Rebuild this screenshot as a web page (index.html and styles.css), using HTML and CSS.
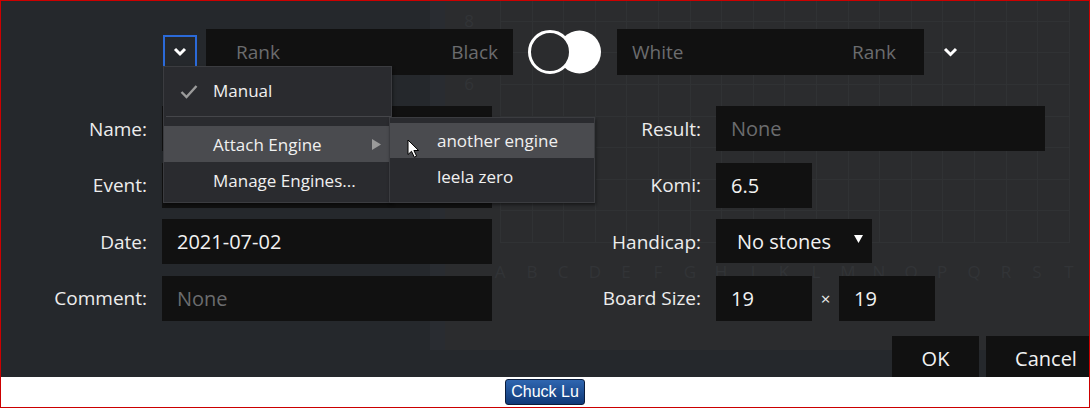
FILE: index.html
```html
<!DOCTYPE html>
<html>
<head>
<meta charset="utf-8">
<title>Game Info</title>
<link rel="stylesheet" href="styles.css">
</head>
<body>
<div class="frame">
<div class="stage">

<svg class="board" width="660" height="352" viewBox="0 0 660 352">
  <rect x="0" y="0" width="660" height="350" fill="#2b2c2e"/>
  <rect x="0" y="0" width="15" height="350" fill="#292c31"/>
  <g stroke="#303234" stroke-width="1">
    <path d="M70.5 0V242M102.5 0V242M133.5 0V242M165.5 0V242M196.5 0V242M228.5 0V242M260.5 0V242M291.5 0V242M323.5 0V242M354.5 0V242M386.5 0V242M418.5 0V242M449.5 0V242M481.5 0V242M512.5 0V242M544.5 0V242M576.5 0V242M607.5 0V242M639.5 0V242"/>
    <path d="M70 21.5H640M70 52.5H640M70 84.5H640M70 116.5H640M70 147.5H640M70 179.5H640M70 210.5H640M70 242.5H640"/>
  </g>
  <g class="coord" fill="#323437">
    <text x="39" y="27">8</text><text x="39" y="90">6</text>
    <text x="70" y="278">A</text><text x="102" y="278">B</text><text x="133" y="278">C</text><text x="165" y="278">D</text>
    <text x="196" y="278">E</text><text x="228" y="278">F</text><text x="260" y="278">G</text><text x="291" y="278">H</text>
    <text x="323" y="278">J</text><text x="354" y="278">K</text><text x="386" y="278">L</text><text x="418" y="278">M</text>
    <text x="449" y="278">N</text><text x="481" y="278">O</text><text x="512" y="278">P</text><text x="544" y="278">Q</text>
    <text x="576" y="278">R</text><text x="607" y="278">S</text><text x="639" y="278">T</text>
  </g>
</svg>

<div class="dialog">
  <div class="players">
    <span class="drop focused"><svg width="14" height="10" viewBox="0 0 14 10"><path d="M2 2l5 5 5-5" stroke="#fff" stroke-width="3" fill="none"/></svg></span>
    <div class="player">
      <span class="ph rank-left">Rank</span>
      <span class="ph">Black</span>
    </div>
    <svg class="stones" width="74" height="46" viewBox="0 0 74 46">
      <circle cx="51.5" cy="23" r="21.5" fill="#fff"/>
      <circle cx="22" cy="23" r="20.5" fill="#2b2c2e" stroke="#fff" stroke-width="3"/>
    </svg>
    <div class="player">
      <span class="ph">White</span>
      <span class="ph rank-right">Rank</span>
    </div>
    <span class="drop"><svg width="15" height="10" viewBox="0 0 15 10"><path d="M2 2l5.5 5.5 5.5-5.5" stroke="#fff" stroke-width="3" fill="none"/></svg></span>
  </div>

  <div class="info">
    <label>Name:</label>
    <div class="field"></div>
    <label>Result:</label>
    <div class="field"><span class="ph">None</span></div>

    <label>Event:</label>
    <div class="field"></div>
    <label>Komi:</label>
    <div class="field small">6.5</div>

    <label>Date:</label>
    <div class="field">2021-07-02</div>
    <label>Handicap:</label>
    <div class="field select">No stones
      <svg width="9" height="8" viewBox="0 0 9 8"><path d="M0 0h9L4.5 8z" fill="#fff"/></svg>
    </div>

    <label>Comment:</label>
    <div class="field"><span class="ph">None</span></div>
    <label>Board Size:</label>
    <div class="size">
      <div class="field small">19</div>
      <span class="times">×</span>
      <div class="field small">19</div>
    </div>
  </div>

  <div class="actions">
    <span class="btn ok">OK</span>
    <span class="btn cancel">Cancel</span>
  </div>
</div>

<div class="menu main-menu">
  <div class="item">
    <svg class="check" width="18" height="15" viewBox="0 0 18 15"><path d="M1.5 8l5 5L16.5 2" stroke="#9b9b9b" stroke-width="2.4" fill="none"/></svg>
    Manual
  </div>
  <div class="sep"></div>
  <div class="item hover">Attach Engine
    <svg class="arrow" width="9" height="11" viewBox="0 0 9 11"><path d="M0 0l9 5.5L0 11z" fill="#9a9a9a"/></svg>
  </div>
  <div class="item">Manage Engines...</div>
</div>

<div class="menu sub-menu">
  <div class="item hover">another engine</div>
  <div class="item">leela zero</div>
</div>

<svg class="cursor" width="13" height="20" viewBox="0 0 13 20">
  <path d="M1 1V15.5L4.5 12.3L7.3 18.2L9.6 17.1L6.9 11.5H11.6Z" fill="#fff" stroke="#000" stroke-width="1"/>
</svg>

</div>
<div class="footer"><span class="badge">Chuck Lu</span></div>
</div>
</body>
</html>
```

FILE: styles.css
```css
/* Game info dialog over a dark go board */

body
{ margin: 0;
background: #fff;
font-family: "Open Sans", "Noto Sans", sans-serif;
}

div.frame
{ width: 1088px;
height: 406px;
border: 1px solid #cc0000;
display: flex;
flex-direction: column;
}

div.stage
{ position: relative;
height: 376px;
overflow: hidden;
background: #25282c;
color: #ececec;
}

svg.board
{ position: absolute;
left: 429px;
top: -1px;
}

svg.board .coord
{ font-family: "Open Sans", sans-serif;
font-size: 17px;
text-anchor: middle;
}

div.dialog
{ position: relative;
display: flex;
flex-direction: column;
}

/* player row */

div.players
{ display: flex;
align-items: center;
padding: 28px 0 0 162px;
height: 46px;
}

span.drop
{ width: 34px;
height: 34px;
box-sizing: border-box;
display: flex;
align-items: center;
justify-content: center;
}

span.drop.focused
{ border: 2px solid #2b6ad9;
margin-right: 9px;
}

span.drop:last-child
{ margin-left: 9px;
}

div.player
{ width: 307px;
height: 46px;
box-sizing: border-box;
padding: 0 15px;
background: #111;
display: flex;
align-items: center;
justify-content: space-between;
font-size: 19px;
}

.ph
{ color: #6b6c6e;
}

span.rank-left
{ margin-left: 15px;
}

span.rank-right
{ margin-right: 13px;
}

svg.stones
{ margin: 0 15px 0 15px;
}

/* info grid */

div.info
{ display: grid;
grid-template-columns: 146px 330px 194px 329px;
grid-auto-rows: 45px;
column-gap: 15px;
row-gap: 11.5px;
margin-top: 31px;
}

div.info label
{ font-size: 19px;
text-align: right;
align-self: center;
color: #ededed;
}

div.field
{ background: #111;
display: flex;
align-items: center;
padding: 0 15px;
font-size: 20px;
color: #f2f2f2;
}

div.field.small
{ width: 66px;
}

div.field.select
{ width: 126px;
height: 44px;
padding-left: 21px;
padding-right: 9px;
justify-content: space-between;
}

div.field.select svg
{ margin-top: -4px;
}

div.size
{ display: flex;
align-items: stretch;
}

span.times
{ width: 27px;
text-align: center;
align-self: center;
font-size: 17px;
}

/* buttons */

div.actions
{ display: flex;
gap: 7px;
margin: 15px 0 0 891px;
}

span.btn
{ height: 45px;
background: #111;
display: flex;
align-items: center;
justify-content: center;
font-size: 20px;
color: #f2f2f2;
flex: none;
}

span.ok
{ width: 87px;
}

span.cancel
{ width: 120px;
}

/* context menus */

div.menu
{ position: absolute;
background: #2a2b2f;
border: 1px solid #3b3c40;
box-shadow: 1px 2px 3px rgba(0, 0, 0, 0.45);
box-sizing: border-box;
font-size: 17px;
color: #f0f0f0;
}

div.main-menu
{ left: 162px;
top: 65px;
width: 229px;
height: 137px;
padding-top: 5px;
}

div.sub-menu
{ left: 388px;
top: 116px;
width: 206px;
height: 86px;
padding-top: 5px;
z-index: 2;
}

div.menu .item
{ position: relative;
height: 36px;
display: flex;
align-items: center;
padding-left: 49px;
}

div.sub-menu .item
{ padding-left: 47px;
}

div.menu .item.hover
{ background: #4a4b4f;
}

div.main-menu .item.hover
{ margin-right: 2px;
}

div.sub-menu .item.hover
{ height: 35px;
}

svg.check
{ position: absolute;
left: 16px;
top: 12px;
}

svg.arrow
{ position: absolute;
right: 8px;
top: 13px;
}

div.sep
{ height: 18px;
position: relative;
}

div.sep::after
{ content: "";
position: absolute;
left: 2px;
right: 0;
top: 8px;
border-top: 1px solid #45464a;
}

svg.cursor
{ position: absolute;
left: 406px;
top: 138px;
z-index: 3;
}

/* footer strip */

div.footer
{ height: 30px;
display: flex;
justify-content: center;
align-items: center;
background: #fff;
}

span.badge
{ width: 80px;
height: 26px;
box-sizing: border-box;
border: 1px solid #0a1c3c;
border-radius: 3px;
background: linear-gradient(#2f66b0, #0f3877);
color: #fff;
font-family: "Liberation Sans", Arial, sans-serif;
font-size: 16px;
display: flex;
align-items: center;
justify-content: center;
}
```
